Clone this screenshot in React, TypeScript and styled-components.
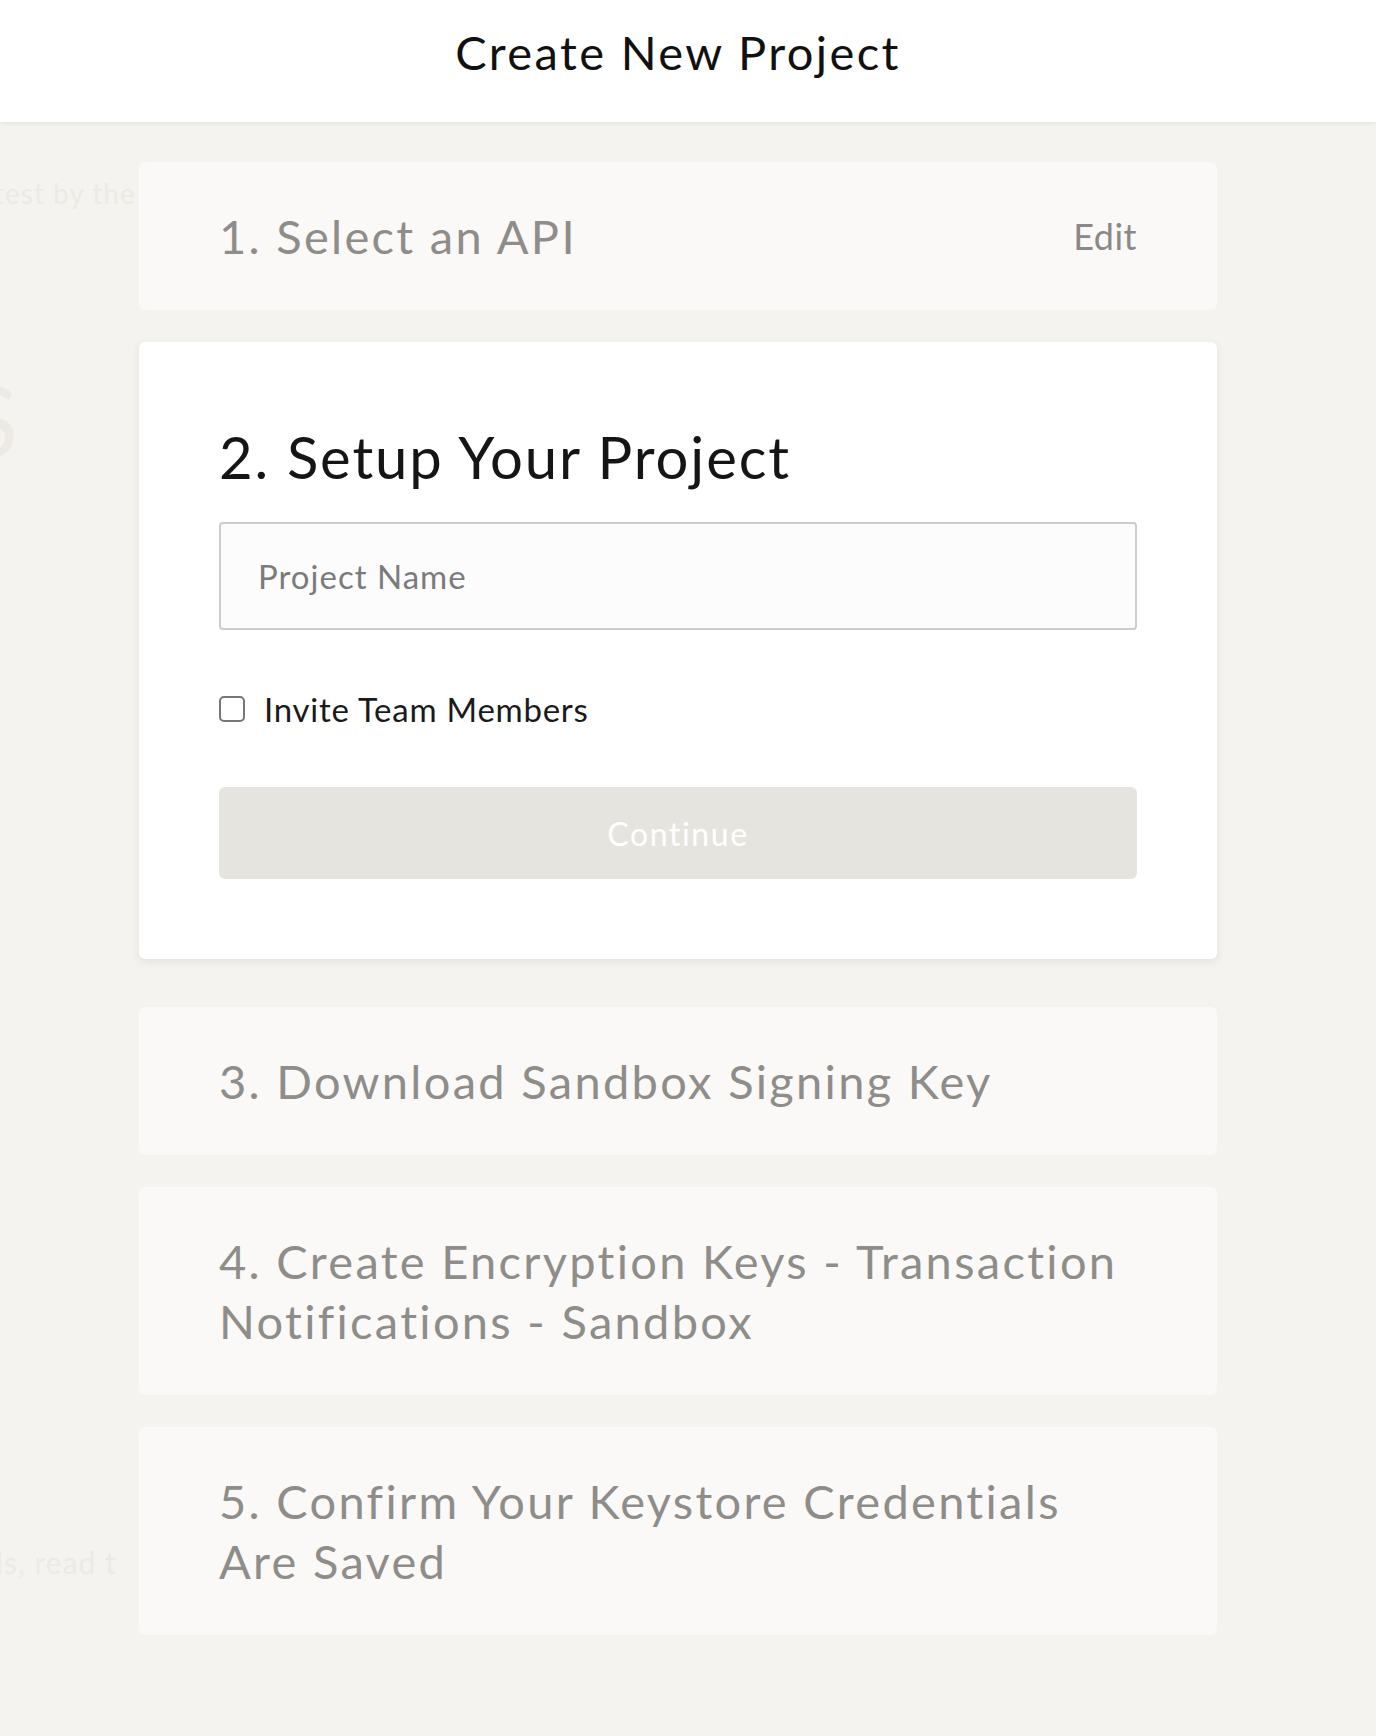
import React from "react";
import styled, { createGlobalStyle } from "styled-components";

const GlobalStyle = createGlobalStyle`
  html, body {
    margin: 0;
    padding: 0;
    background: #f5f3ef;
  }
  body {
    font-family: Lato, "Open Sans", sans-serif;
    -webkit-font-smoothing: antialiased;
  }
  * {
    box-sizing: border-box;
  }
`;

interface Step {
  number: number;
  title: string;
  editable?: boolean;
}

const steps: Step[] = [
  { number: 1, title: "Select an API", editable: true },
  { number: 2, title: "Setup Your Project" },
  { number: 3, title: "Download Sandbox Signing Key" },
  { number: 4, title: "Create Encryption Keys - Transaction Notifications - Sandbox" },
  { number: 5, title: "Confirm Your Keystore Credentials Are Saved" }
];

const Page = styled.div`
  position: relative;
  min-height: 1736px;
  overflow: hidden;
  background: #f5f3ef;
`;

// faint text of the page that sits under the dialog
const Backdrop = styled.div`
  position: absolute;
  inset: 0;
  pointer-events: none;
  color: #edeae5;
  font-family: Lato, sans-serif;
  letter-spacing: 1px;

  .line {
    position: absolute;
    white-space: nowrap;
  }
`;

const Header = styled.header`
  position: relative;
  z-index: 2;
  height: 122px;
  padding: 0 20px 18px 0;
  background: #ffffff;
  box-shadow: 0 2px 4px rgba(0, 0, 0, 0.06);
  display: flex;
  align-items: center;
  justify-content: center;
`;

const HeaderTitle = styled.h1`
  margin: 0;
  font-size: 47px;
  font-weight: 400;
  color: #111111;
  letter-spacing: 2.4px;
`;

const Steps = styled.main`
  position: relative;
  z-index: 1;
  width: 1078px;
  margin: 40px 0 0 139px;
  display: flex;
  flex-direction: column;
  gap: 32px;
`;

const Card = styled.section`
  display: flex;
  align-items: center;
  justify-content: space-between;
  padding: 44px 80px;
  border-radius: 6px;
  background: #faf9f7;
`;

const StepTitle = styled.h2`
  margin: 0;
  font-size: 47px;
  line-height: 60px;
  font-weight: 400;
  letter-spacing: 2.3px;
  color: #8f8d89;
`;

const EditLink = styled.a`
  font-size: 36px;
  letter-spacing: 0.5px;
  color: #8a8986;
  text-decoration: none;
  cursor: pointer;
`;

const ActiveCard = styled.section`
  display: flex;
  flex-direction: column;
  padding: 80px;
  margin-bottom: 16px;
  border-radius: 6px;
  background: #ffffff;
  box-shadow: 0 3px 10px rgba(60, 50, 30, 0.09);
`;

const ActiveTitle = styled.h2`
  margin: 0;
  font-size: 58px;
  line-height: 70px;
  font-weight: 400;
  letter-spacing: 1.9px;
  color: #151515;
`;

const NameInput = styled.input`
  margin-top: 30px;
  height: 108px;
  padding: 0 37px;
  border: 2px solid #cfcdca;
  border-radius: 4px;
  background: #fcfcfc;
  font-family: inherit;
  font-size: 33px;
  letter-spacing: 1px;
  color: #222;
  outline: none;

  &::placeholder {
    color: #7b7b7b;
  }
`;

const CheckRow = styled.label`
  margin-top: 55px;
  height: 48px;
  display: flex;
  align-items: center;
  gap: 19px;
  font-size: 33px;
  letter-spacing: 0.75px;
  color: #1a1a1a;
  cursor: pointer;
`;

const CheckBox = styled.input`
  appearance: none;
  margin: 0;
  width: 26px;
  height: 26px;
  border: 2px solid #767676;
  border-radius: 5px;
  background: #fff;
`;

const ContinueButton = styled.button`
  margin-top: 54px;
  height: 92px;
  border: none;
  border-radius: 6px;
  background: #e6e4df;
  color: #ffffff;
  font-family: inherit;
  font-size: 32px;
  letter-spacing: 1.6px;
  cursor: not-allowed;
`;

export default function App() {
  return (
    <>
      <GlobalStyle />
      <Page>
        <Backdrop>
          <span className="line" style={{ top: 176, left: -6, fontSize: 28 }}>
            test by the
          </span>
          <span className="line" style={{ top: 362, left: -34, fontSize: 96 }}>
            S
          </span>
          <span className="line" style={{ top: 1544, left: -4, fontSize: 30 }}>
            ls, read t
          </span>
        </Backdrop>
        <Header>
          <HeaderTitle>Create New Project</HeaderTitle>
        </Header>
        <Steps>
          {steps.map((step) =>
            step.number === 2 ? (
              <ActiveCard key={step.number}>
                <ActiveTitle>
                  {step.number}. {step.title}
                </ActiveTitle>
                <NameInput type="text" placeholder="Project Name" />
                <CheckRow>
                  <CheckBox type="checkbox" />
                  Invite Team Members
                </CheckRow>
                <ContinueButton disabled>Continue</ContinueButton>
              </ActiveCard>
            ) : (
              <Card key={step.number}>
                <StepTitle>
                  {step.number}. {step.title}
                </StepTitle>
                {step.editable && <EditLink>Edit</EditLink>}
              </Card>
            )
          )}
        </Steps>
      </Page>
    </>
  );
}
